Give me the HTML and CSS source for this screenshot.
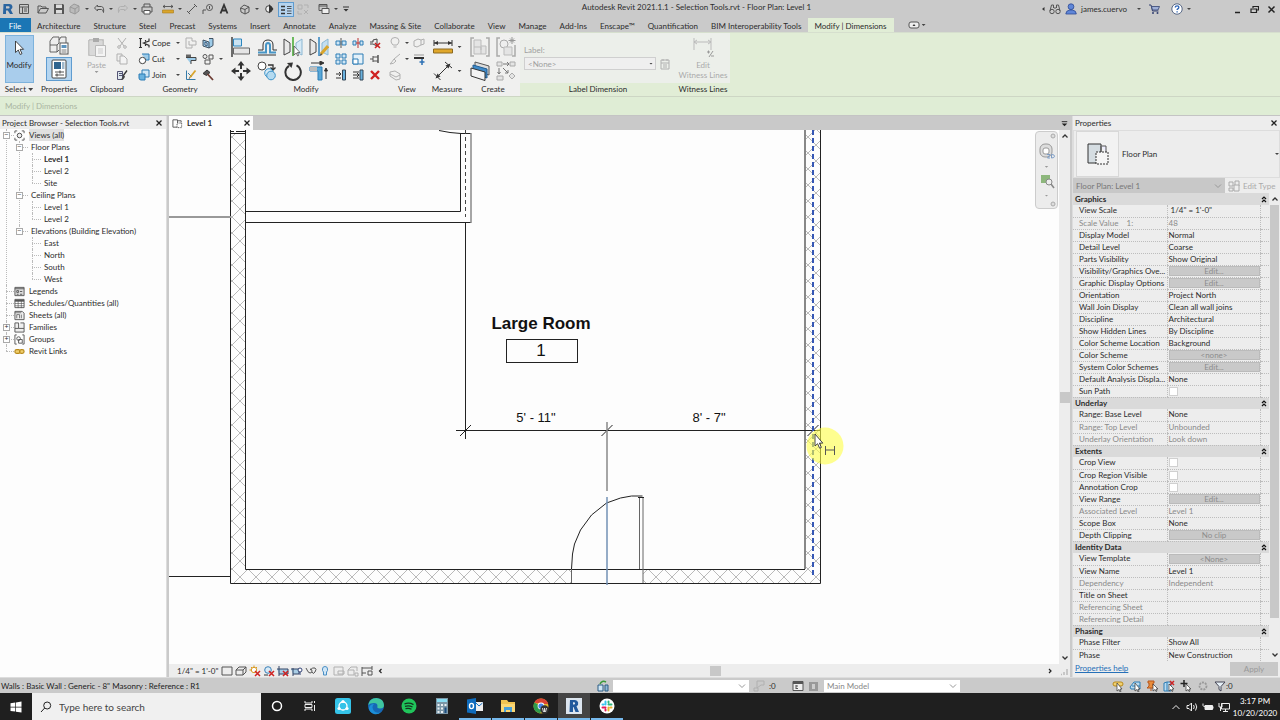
FILE: index.html
```html
<!DOCTYPE html>
<html lang="en">
<head>
<meta charset="utf-8">
<title>Autodesk Revit 2021.1.1 - Selection Tools.rvt - Floor Plan: Level 1</title>
<link rel="stylesheet" href="styles.css">
</head>
<body>
<svg class="defs" aria-hidden="true"><symbol id="chev2" viewBox="0 0 8 8"><path d="M2 4l2-2 2 2M2 7l2-2 2 2" fill="none" stroke="#111" stroke-width="1.200"/></symbol></svg>
<header class="titlebar">
  <div class="qat">
    <svg class="ic" viewBox="0 0 12 12"><path d="M1.500 1H4v10H1zM3 1h4.500a3 3 0 0 1 1.300 5.700L11 11H8L5.800 7.500H3.500V5.500H6.500a1 1 0 0 0 0-2.200H3z" fill="#2a64a0"/></svg>
    <svg class="ic ln" viewBox="0 0 12 12"><path d="M1.500 1.500h9v9h-9zM1.500 4h9M4.500 4v6.500M6 6h3M6 8h3"/></svg>
    <svg class="ic ln sp3" viewBox="0 0 12 12"><path d="M1 10V3h3l1 1h4v1.500M1 10l2.500-4.500h8L9 10z"/></svg>
    <svg class="ic" viewBox="0 0 12 12"><path d="M1 1h9l1 1v9H1z" fill="#555"/><path d="M3 1.500h6v3.500H3zM3 7h6v3.500H3z" fill="#ddd"/></svg>
    <svg class="ic" viewBox="0 0 12 12"><path d="M1 4l4-3 5 2v5l-4 3-5-2z" fill="#bbb" stroke="#999"/><path d="M1 4l5 2 4-3M6 6v5" stroke="#999" fill="none"/></svg>
    <i class="dd"></i>
    <svg class="ic ln" viewBox="0 0 12 12"><path d="M4.500 2L1.500 5l3 3V6.500h4q1.500 0 2 3 .8-5.500-2-6h-4z"/></svg>
    <i class="dd"></i>
    <svg class="ic ln pale" viewBox="0 0 12 12"><path d="M7.500 2l3 3-3 3V6.500h-4q-1.500 0-2 3-.8-5.500 2-6h4z"/></svg>
    <i class="dd"></i>
    <svg class="ic ln" viewBox="0 0 12 12"><path d="M3 4V1h6v3M1 4h10v5H1z"/><path d="M3 7.500h6V11H3z" fill="#fff"/></svg>
    <svg class="ic sp5" viewBox="0 0 12 12"><path d="M1 3.500h10M3 2L1 3.500 3 5M9 2l2 1.500L9 5" stroke="#444" fill="none" stroke-width=".8"/><path d="M.5 7h11v3H.5z" fill="#d9a52c" stroke="#a87a1c" stroke-width=".6"/></svg>
    <i class="dd"></i>
    <svg class="ic ln" viewBox="0 0 12 12"><path d="M2.500 9.500l7-7M1 8l3 3M8 1l3 3"/></svg>
    <svg class="ic ln" viewBox="0 0 12 12"><path d="M1 11V7h3"/><circle cx="7.500" cy="4.500" r="3"/><path d="M7.500 3v3"/></svg>
    <svg class="ic" viewBox="0 0 12 12"><path d="M2.500 10.500L6 2l3.500 8.500M4 7.500h4" fill="none" stroke="#333" stroke-width="1.800"/></svg>
    <svg class="ic ln sp5" viewBox="0 0 12 12"><path d="M1.500 5L5 2l5 2v5l-4 2-4-2zM1.500 5L6 6.500 10 4M6 6.500V11"/></svg>
    <i class="dd"></i>
    <svg class="ic" viewBox="0 0 12 12"><circle cx="6" cy="6" r="3.300" fill="#eee" stroke="#444"/><path d="M6 1l4.500 5L6 10.500z" fill="#333"/></svg>
    <span class="thin"><svg class="ic" viewBox="0 0 12 12"><path d="M1 2.500h4M1 6h4M1 9.500h4" stroke="#333" stroke-width="1.600"/><path d="M7 2.500h4.500M7 4.500h4.500M7 7h4.500M7 9.500h4.500" stroke="#333" stroke-width=".8"/></svg></span>
    <svg class="ic ln pale" viewBox="0 0 12 12"><path d="M1 2h4v4H1zM7 2h4v3M1 8v3h4M7 7l4 4M11 7l-4 4"/></svg>
    <svg class="ic ln sp5" viewBox="0 0 12 12"><path d="M1 1.500h8v6H1zM1 3h8"/><path d="M4 5.500h7v5H4z" fill="#eee"/></svg>
    <i class="dd"></i>
    <svg class="ic qc" viewBox="0 0 12 12"><path d="M3 4h6" stroke="#333"/><path d="M3.500 6h5L6 8.500z" fill="#333"/></svg>
  </div>
  <div class="title">Autodesk Revit 2021.1.1 - Selection Tools.rvt - Floor Plan: Level 1</div>
  <div class="account">
    <svg class="ic n4" viewBox="0 0 4 12"><path d="M3.500 4v4L1 6z" fill="#333"/></svg>
    <svg class="ic ln" viewBox="0 0 12 12"><path d="M2.500 2h2v3M9.500 2h-2v3M5 5h2"/><circle cx="3" cy="8.500" r="2.200"/><circle cx="9" cy="8.500" r="2.200"/><path d="M1 8l1.500-6M11 8L9.500 2"/></svg>
    <svg class="ic" viewBox="0 0 12 12"><circle cx="6" cy="3.700" r="2.900" fill="#5f86d8" stroke="#2d4a94" stroke-width=".8"/><path d="M.8 11q0-3.500 4-4h2.500q4 .5 4 4z" fill="#5f86d8" stroke="#2d4a94" stroke-width=".8"/></svg>
    <span class="user">james.cuervo</span>
    <i class="dd"></i>
    <svg class="ic cart" viewBox="0 0 12 12"><path d="M1 2h2l1.500 6h6" stroke="#344272" fill="none"/><path d="M3.500 3.500h8L10 7H4.500z" fill="#9fb0d8" stroke="#344272" stroke-width=".8"/><circle cx="5" cy="10" r="1" fill="#344272"/><circle cx="9.500" cy="10" r="1" fill="#344272"/></svg>
    <svg class="ic help" viewBox="0 0 12 12"><circle cx="6" cy="6" r="5.200" fill="#fff" stroke="#34496e" stroke-width=".8"/><path d="M4.300 4.600q0-1.700 1.800-1.700t1.700 1.500q0 .9-1 1.500-.7.500-.7 1.200M6.100 8.200v1.300" fill="none" stroke="#2a62b5" stroke-width="1.300"/></svg>
    <i class="dd"></i>
  </div>
  <div class="winbtns">
    <button aria-label="Minimize"><svg viewBox="0 0 9 9"><path d="M2 7.500h5" stroke="#222" stroke-width="1.500"/></svg></button>
    <button aria-label="Restore"><svg viewBox="0 0 9 9"><path d="M3 3V1.500h5.500V5H6.500M1 4h5.500v3.500H1z" fill="none" stroke="#222" stroke-width="1.200"/></svg></button>
    <button aria-label="Close"><svg viewBox="0 0 9 9"><path d="M1.500 1.500l6 6M7.500 1.500l-6 6" stroke="#222" stroke-width="1.500"/></svg></button>
  </div>
</header>

<nav class="tabs">
  <button class="file">File</button>
  <button>Architecture</button><button>Structure</button><button>Steel</button><button>Precast</button><button>Systems</button><button>Insert</button><button>Annotate</button><button>Analyze</button><button>Massing &amp; Site</button><button>Collaborate</button><button>View</button><button>Manage</button><button>Add-Ins</button><button>Enscape™</button><button>Quantification</button><button>BIM Interoperability Tools</button><button class="on">Modify | Dimensions</button>
  <span class="tabopt"><svg viewBox="0 0 12 8"><rect x="1" y="1" width="10" height="6" rx="2" fill="#eee" stroke="#555"/><path d="M4.500 5L6 3l1.500 2z" fill="#333"/></svg><i class="dd"></i></span>
</nav>

<section class="ribbon">
  <div class="panel p-select">
    <div class="body"><button class="modify"><svg viewBox="0 0 12 16"><path d="M2.500 1v11.500l2.800-2.500 1.900 4.500 1.800-.8-2-4.400h3.600z" fill="#fff" stroke="#333" stroke-width=".9"/></svg>Modify</button></div>
    <div class="name">Select <i class="dd"></i></div>
  </div>
  <div class="panel p-prop">
    <div class="body col">
      <svg class="big" viewBox="0 0 20 20"><path d="M1 6l3-4h6v6l-2 2H1zM10 5l2-3h5v6M1 10v7h7l2-2M8 10v7" fill="#eee" stroke="#555" stroke-width=".9"/><rect x="11" y="8" width="8" height="11" fill="#fff" stroke="#555"/><path d="M12.500 10h5v3h-5z" fill="#5c93bd"/><path d="M12.500 15h5M12.500 17h5" stroke="#555" stroke-width=".8"/></svg>
      <span class="sel"><svg class="big" viewBox="0 0 20 20"><rect x="3" y="1" width="14" height="18" rx="1" fill="#fff" stroke="#444"/><path d="M5 3h7v7H5z" fill="#2f648f"/><path d="M13 3h2.500v7H13z" fill="#9fb8cc"/><path d="M6 13h9M6 16h9M11 11.500v3M8 14.500v3" stroke="#555" stroke-width="1.200"/></svg></span>
    </div>
    <div class="name">Properties</div>
  </div>
  <div class="panel p-clip">
    <div class="body">
      <div class="paste"><svg viewBox="0 0 20 20"><path d="M2 3h14v5M2 3v15h6" fill="none" stroke="#b5b5b5" stroke-width="1.500"/><path d="M2.500 3.500h13v5h-7V18h-6z" fill="#d9d9d9"/><rect x="6" y="1" width="6" height="4" fill="#aaa"/><path d="M8.500 8.500h10v11h-10z" fill="#f4f4f4" stroke="#b9b9b9"/><path d="M11 12h5M11 14h5M11 16h5" stroke="#ccc"/></svg>Paste<i class="dd g"></i></div>
      <div class="col3">
        <svg class="ic pale ln" viewBox="0 0 12 12"><path d="M2 1l6 8M10 1L4 9"/><circle cx="3" cy="10" r="1.300"/><circle cx="9" cy="10" r="1.300"/></svg>
        <svg class="ic pale ln" viewBox="0 0 12 12"><path d="M1 1h5v7H1z"/><path d="M4 3h4l3 3v5H4z" fill="#f3f3f3"/></svg>
        <svg class="ic" viewBox="0 0 12 12"><path d="M1.500 2.500h5v8h-5zM3 4.500h3M3 6.500h3" fill="#dfe8ee" stroke="#446" stroke-width=".9"/><path d="M11 1.500L7 7" stroke="#333" stroke-width="1.300"/><path d="M7.500 6L9 7.500Q8 11 4.500 11 6.500 9 7.500 6z" fill="#444"/></svg>
      </div>
    </div>
    <div class="name">Clipboard</div>
  </div>
  <div class="panel p-geom">
    <div class="body geom">
      <span class="cmd"><svg class="ic" viewBox="0 0 12 12"><path d="M1 1.500h3M2.500 1.500v9M1 10.500h3M11 1.500v2.500L5.500 6 11 8.500v2M7.500 3v1.500M7.500 7.500V9" fill="none" stroke="#333" stroke-width="1.200"/></svg>Cope<i class="dd"></i></span>
      <svg class="ic pale ln" viewBox="0 0 12 12"><path d="M1 1h6v3h4v4H7v3H1zM4 4v4h3"/></svg>
      <svg class="ic" viewBox="0 0 12 12"><path d="M1 3l6 2v6L1 9zM7 1.500h4v7L7 11" fill="#9dcbe8" stroke="#345" stroke-width=".9"/><path d="M3 5l2 1v3L3 8z" fill="#fff" stroke="#357"/></svg>
      <span class="cmd"><svg class="ic" viewBox="0 0 12 12"><path d="M4 1h7v6H7" fill="#9dcbe8" stroke="#2c7db5"/><circle cx="4.500" cy="7.500" r="3.200" fill="#fff" stroke="#444"/></svg>Cut<i class="dd"></i></span>
      <svg class="ic" viewBox="0 0 12 12"><path d="M1 1.500h5v3H1z" fill="#666"/><path d="M1 4.500h10v3H6V11" fill="#9dcbe8" stroke="#444"/></svg>
      <svg class="ic ln" viewBox="0 0 12 12"><circle cx="3" cy="3.500" r="2"/><path d="M7 2h4v4H7zM3 7v4h5V7z"/></svg>
      <i class="dd"></i>
      <span class="cmd"><svg class="ic" viewBox="0 0 12 12"><path d="M4 1h7v7H4z" fill="#cfe6f5" stroke="#2c7db5"/><path d="M1 5h6v6H3Q1 11 1 9z" fill="#69b2df" stroke="#2c7db5"/></svg>Join<i class="dd"></i></span>
      <svg class="ic" viewBox="0 0 12 12"><path d="M1.500 1.500v9h9M3 4l4 4" fill="none" stroke="#357ba8"/><path d="M10.500 1.500L5 8.500" stroke="#d9a52c" stroke-width="1.800"/><path d="M5 8.500l-1.200 1.200" stroke="#333"/></svg>
      <svg class="ic" viewBox="0 0 12 12"><path d="M1 4.500L5 1l3 2.500-3.500 3z" fill="#555" stroke="#333"/><path d="M5.500 5L11 11" stroke="#6d3c33" stroke-width="1.800"/></svg>
    </div>
    <div class="name">Geometry</div>
  </div>
  <div class="panel p-mod">
    <div class="body">
      <div class="bigs">
        <svg class="big" viewBox="0 0 20 20"><path d="M1 0v20" stroke="#333" stroke-width="1.400"/><path d="M2.500 2h8v7h-8z" fill="#cbe3f2" stroke="#2c86be"/><path d="M2.500 11h16v6h-16z" fill="#e5e5e5" stroke="#666"/></svg>
        <svg class="big" viewBox="0 0 20 20"><path d="M1 18h18M1 13h5V8q0-5 5-5t5 5v5h4" fill="none" stroke="#333"/><path d="M1 15.500h8V8.500q0-2.500 2-2.500t2 2.500v7h6" fill="none" stroke="#4795c6" stroke-width="2"/></svg>
        <svg class="big" viewBox="0 0 20 20"><path d="M1 2l6 4v9l-6 3z" fill="#e8e8e8" stroke="#444"/><path d="M19 2l-6 4v9l6 3z" fill="#d7eaf6" stroke="#8bb7d3"/><path d="M10 0v19" stroke="#4cae3a" stroke-width="1.600"/><path d="M11 9v9l2.200-2 1.500 3 1-.5-1.300-3h2.600z" fill="#fff" stroke="#444" stroke-width=".7"/></svg>
        <svg class="big" viewBox="0 0 20 20"><path d="M1 2l6 4v9l-6 3z" fill="#e8e8e8" stroke="#444"/><path d="M19 2l-6 4v9l6 3z" fill="#c4dff0" stroke="#8bb7d3"/><path d="M10 0v19" stroke="#3085bf" stroke-width="1.500"/><path d="M19 9l-7 8" stroke="#d9a52c" stroke-width="3"/><path d="M12 16l-1.500 3 2.500-1z" fill="#333"/></svg>
        <svg class="big" viewBox="0 0 20 20"><path d="M10 0l3.500 4.500H11V8H9V4.500H6.500zM10 20l-3.500-4.500H9V12h2v3.500h2.500zM0 10l4.500-3.500V9H8v2H4.500v2.500zM20 10l-4.500 3.500V11H12V9h3.500V6.500z" fill="#333"/></svg>
        <svg class="big" viewBox="0 0 20 20"><circle cx="5" cy="5" r="4" fill="#fff" stroke="#444"/><path d="M11 4h5v4M13.500 6.500L16 9l2.500-2.500" fill="none" stroke="#333" stroke-width="1.300"/><circle cx="12" cy="12" r="4.300" fill="#d7ebf7" stroke="#3c92c8"/><circle cx="14" cy="14.500" r="4.300" fill="#b4daf0" stroke="#3c92c8"/></svg>
        <svg class="big" viewBox="0 0 20 20"><path d="M6 4.800a7.700 7.700 0 1 0 7.500-.4" fill="none" stroke="#333" stroke-width="2"/><path d="M4 2l6-.5L8.500 7z" fill="#333"/></svg>
        <svg class="big" viewBox="0 0 20 20"><path d="M2 2h12M11 0l4 2-4 2z" stroke="#333" fill="#333"/><path d="M1 6h12v13H9V10H1z" fill="#58a8d8" stroke="#2c7db5"/><path d="M1 6h7v4H1z" fill="#bcbcbc"/><path d="M17 18V8M15.500 10L17 7l1.500 3z" stroke="#333" fill="#333"/></svg>
      </div>
      <div class="smalls">
        <svg class="ic" viewBox="0 0 12 12"><path d="M1 4h4v4H1zM7 4h4v4H7z" fill="#cfe6f5" stroke="#2c7db5"/><path d="M6 1v10" stroke="#555"/></svg>
        <svg class="ic" viewBox="0 0 12 12"><path d="M1 4h3v4H1zM8 4h3v4H8z" fill="#cfe6f5" stroke="#2c7db5"/><path d="M6 1v10M4 6h4" stroke="#b33"/></svg>
        <svg class="ic" viewBox="0 0 12 12"><path d="M1 5h3V3l4-1v7L4 7H1" fill="#eee" stroke="#444"/><path d="M6 6l5 5M11 6l-5 5" stroke="#c22" stroke-width="1.600"/></svg>
        <svg class="ic" viewBox="0 0 12 12"><path d="M1 1h4v4H1zM7 1h4v4H7zM1 7h4v4H1zM7 7h4v4H7z" fill="#cfe6f5" stroke="#2c7db5"/></svg>
        <svg class="ic" viewBox="0 0 12 12"><path d="M1 1h10v10H1z" fill="#e4f1f9" stroke="#2c7db5"/><path d="M1 6h5v5H1z" fill="#fff" stroke="#2c7db5"/></svg>
        <svg class="ic ln" viewBox="0 0 12 12"><path d="M1 6h3M4 3v6M4 4h5M4 8h5M9 2v8z"/></svg>
        <svg class="ic" viewBox="0 0 12 12"><path d="M1 5h5M4 3l2 2-2 2M1 9h5" fill="none" stroke="#333"/><path d="M7.500 1h3v10h-3z" fill="#69b2df" stroke="#345"/></svg>
        <svg class="ic" viewBox="0 0 12 12"><path d="M1 3h6M1 6h6M5 4l2 2-2 2M1 9h6" fill="none" stroke="#333"/><path d="M8 1h3v10H8z" fill="#69b2df" stroke="#345"/></svg>
        <svg class="ic" viewBox="0 0 12 12"><path d="M2 2l8 8M10 2l-8 8" stroke="#cf2222" stroke-width="2.400"/></svg>
      </div>
    </div>
    <div class="name">Modify</div>
  </div>
  <div class="panel p-view">
    <div class="body view">
      <svg class="ic pale ln" viewBox="0 0 12 12"><path d="M4 8q-2-2-2-4a4 3.500 0 0 1 8 0q0 2-2 4zM4.500 10h3"/></svg><i class="dd"></i>
      <svg class="ic pale ln" viewBox="0 0 12 12"><path d="M1 4l4-2 3 1v5l-4 2-3-1zM8 3l3-1v5L8 8"/></svg>
      <svg class="ic pale ln" viewBox="0 0 12 12"><path d="M11 1L5 6M5 6l2 2q-2 3-6 3 2-2 4-5z"/></svg><i class="dd"></i>
      <svg class="ic" viewBox="0 0 12 12"><path d="M1 2h10" stroke="#999"/><path d="M1 5h10" stroke="#333" stroke-width="2"/><path d="M9 6v6M6.500 9h5" stroke="#2c70b5" stroke-width="1.500"/></svg>
      <svg class="ic pale ln" viewBox="0 0 12 12"><path d="M1 3l5-1 5 3v5l-4 1-6-4zM1 5l6 3 4-2"/></svg>
    </div>
    <div class="name">View</div>
  </div>
  <div class="panel p-meas">
    <div class="body meas">
      <svg class="big" viewBox="0 0 20 20"><path d="M1 6h18M1 3v6M19 3v6" stroke="#333"/><path d="M1 6l4-2v4zM19 6l-4-2v4z" fill="#333"/><path d="M.5 12h19v4H.5z" fill="#e0a72b" stroke="#8c6a22"/></svg><i class="dd"></i>
      <svg class="big" viewBox="0 0 20 20"><path d="M3 17L17 3M1 12.500l6.500 6.500M12 1l7 6" stroke="#333"/><path d="M2.500 17.500l2-5 3 3zM17.500 2.500l-5 2 3 3z" fill="#333"/></svg><i class="dd"></i>
    </div>
    <div class="name">Measure</div>
  </div>
  <div class="panel p-create">
    <div class="body create">
      <svg class="big" viewBox="0 0 20 20"><path d="M4 1H1v18h3M16 1h3v18h-3" fill="none" stroke="#aaa" stroke-width="1.500"/><path d="M4 3h7v6h5v8H4z" fill="#e4e4e4" stroke="#bbb"/><path d="M4 10h7v7M11 9v4" fill="none" stroke="#bbb"/></svg>
      <svg class="big" viewBox="0 0 20 20"><path d="M4 1H1v18h3M19 8v11h-3" fill="none" stroke="#aaa" stroke-width="1.500"/><circle cx="8" cy="7" r="4" fill="#eee" stroke="#aaa"/><path d="M8 10h8v8H8z" fill="#e4e4e4" stroke="#bbb"/><path d="M16 0v7M12.500 3.500h7M14 1.500l4 4M18 1.500l-4 4" stroke="#999"/></svg>
      <svg class="big" viewBox="0 0 20 20"><path d="M5 1l14 4v9L5 9z" fill="#ddd" stroke="#555"/><path d="M3 4l14 4v9L3 12z" fill="#3f8ac8" stroke="#225d92"/><path d="M1 7l14 4v8.500L1 15z" fill="#f4f4f4" stroke="#333"/></svg>
      <svg class="big" viewBox="0 0 20 20"><path d="M1 1h5v4H1zM14 1h5v4h-5zM1 15h6v4H1zM13 15l3-3 3 3-3 3z" fill="#e4e4e4" stroke="#aaa"/><path d="M7 3h6M11 1l2 2-2 2M3 7v6M1.500 11L3 13l1.500-2M7 7l5 5M12 9v3H9" fill="none" stroke="#777"/></svg>
    </div>
    <div class="name">Create</div>
  </div>
  <div class="panel p-label">
    <div class="body labeldim"><label for="lbl">Label:</label>
      <div class="lblrow"><span class="drop"><select id="lbl" disabled><option>&lt;None&gt;</option></select><i class="dd"></i></span><svg class="ic pale ln" viewBox="0 0 12 12"><path d="M2 2h8v9H2zM2 5h8M4 7h4M4 9h4M4 1v2M8 1v2"/></svg></div></div>
    <div class="name">Label Dimension</div>
  </div>
  <div class="panel p-wit">
    <div class="body wit"><svg viewBox="0 0 20 20"><path d="M1 0v12M18 0v12M1 4h17M4 2L1 4l3 2M15 2l3 2-3 2" fill="none" stroke="#bbb"/><path d="M14 14h3M15.500 12.500v3M16 19l4-6M18 18h3" stroke="#999"/></svg><span>Edit</span><span>Witness Lines</span></div>
    <div class="name">Witness Lines</div>
  </div>
</section>
<div class="options">Modify | Dimensions</div>

<main class="work">
  <aside class="browser">
    <div class="ptitle">Project Browser - Selection Tools.rvt<button class="x" aria-label="Close browser"><svg viewBox="0 0 8 8"><path d="M1.500 1.500l5 5M6.500 1.500l-5 5" stroke="#222" stroke-width="1.300"/></svg></button></div>
    <ul class="tree">
      <li><div class="row"><b class="ex">−</b><svg class="ti" viewBox="0 0 12 12"><path d="M1 3.500V1h2.500M8.500 1H11v2.500M1 8.500V11h2.500M8.500 11H11V8.500" fill="none" stroke="#555"/><circle cx="6" cy="6" r="2.500" fill="#eee" stroke="#444"/></svg><span class="cur">Views (all)</span></div>
        <ul class="l2">
          <li><div class="row"><b class="ex">−</b>Floor Plans</div>
            <ul class="l3"><li><div class="row"><strong>Level 1</strong></div></li><li><div class="row">Level 2</div></li><li><div class="row">Site</div></li></ul></li>
          <li><div class="row"><b class="ex">−</b>Ceiling Plans</div>
            <ul class="l3"><li><div class="row">Level 1</div></li><li><div class="row">Level 2</div></li></ul></li>
          <li><div class="row"><b class="ex">−</b>Elevations (Building Elevation)</div>
            <ul class="l3"><li><div class="row">East</div></li><li><div class="row">North</div></li><li><div class="row">South</div></li><li><div class="row">West</div></li></ul></li>
        </ul></li>
      <li><div class="row"><svg class="ti ln" viewBox="0 0 12 12"><path d="M1 1.500h10v9H1z" fill="#ddd"/><path d="M1 3h10M3 5h2v2H3zM6.500 6H9M3 9h2M6.500 9H9"/></svg>Legends</div></li>
      <li><div class="row"><svg class="ti ln" viewBox="0 0 12 12"><path d="M1 1.500h10v9H1z" fill="#fff"/><path d="M1 3h10" stroke-width="2"/><path d="M1 6h10M1 8.500h10M4.500 3v8M8 3v8" stroke-width=".7"/></svg>Schedules/Quantities (all)</div></li>
      <li><div class="row"><svg class="ti ln" viewBox="0 0 12 12"><path d="M1 1.500h8l2 2v7H1z" fill="#eee"/><path d="M3 9V5h3v4M8 5v4M1 3h7" stroke-width=".8"/></svg>Sheets (all)</div></li>
      <li><div class="row"><b class="ex">+</b><svg class="ti ln" viewBox="0 0 12 12"><path d="M1 1h4v6H1zM7 1h4v6H5M1 7v4h10V7" fill="#eee"/></svg>Families</div></li>
      <li><div class="row"><b class="ex">+</b><svg class="ti ln" viewBox="0 0 12 12"><path d="M3 1H1v10h2M9 1h2v10H9"/><circle cx="5" cy="5" r="2"/><path d="M5 6h4v4H5z"/></svg>Groups</div></li>
      <li><div class="row"><svg class="ti" viewBox="0 0 12 12"><path d="M1 6q0-2 2-2h2q1.500 0 1.500 2T5 8H3Q1 8 1 6zM6 6q0-2 2-2h1q2 0 2 2T9 8H8Q6 8 6 6z" fill="#f0d070" stroke="#b98a1a" stroke-width="1.300"/></svg>Revit Links</div></li>
    </ul>
  </aside>

  <section class="doc">
    <div class="doctabs">
      <div class="doctab"><svg class="ti ln" viewBox="0 0 12 12"><path d="M1 2h5v8H1zM6 3h4v2"/><path d="M5.500 5.500h5v5h-5z" fill="#fff" stroke-dasharray="1.500 1"/></svg><strong>Level 1</strong><button class="x" aria-label="Close tab"><svg viewBox="0 0 8 8"><path d="M1.500 1.500l5 5M6.500 1.500l-5 5" stroke="#222" stroke-width="1.300"/></svg></button></div>
      <svg class="ti" viewBox="0 0 12 12"><path d="M3 4h6" stroke="#222"/><path d="M3 6h6L6 9z" fill="#222"/></svg>
    </div>
    <div class="view-area">
      <svg class="plan" role="img" aria-label="Floor plan">
        <defs><pattern id="hatch" patternUnits="userSpaceOnUse" x="232" y="153" width="16" height="16"><path d="M0 0l16 16M16 0L0 16" stroke="#b2b2b2" stroke-width=".9"/></pattern></defs>
        <g transform="translate(-169 -130)" fill="none" stroke="#222" stroke-width="1">
          <path d="M231 133h15v436h559V130h15v453H231z" fill="url(#hatch)" stroke="none"/>
          <path d="M571 569h72v14h-72z" fill="#fdfdfd" stroke="none"/>
          <path d="M230.500 130v453.500h590V130" />
          <path d="M245.500 130v439.500h559.500" />
          <path d="M805 130v439" stroke="#888" stroke-width="2"/>
          <path d="M230 133.500h16M230 131.500h4M236 131.500h10"/>
          <path d="M246 211.500h214.500V133.500h10.500M246 222.500h225"/>
          <path d="M471 133v90" stroke="#888" stroke-width="1.500"/>
          <path d="M439 130.500l11 2 11 1"/>
          <path d="M465.500 130v87" stroke="#444" stroke-dasharray="4 3"/>
          <path d="M465.500 223v216"/>
          <path d="M169 217h62" stroke="#999" stroke-width="2"/><path d="M169 576.500h62"/>
          <path d="M456 430.500h364"/>
          <path d="M460 436l11-11M601.500 436l11-11M807.500 436l11-11"/>
          <path d="M607 422v69" stroke="#888" stroke-width="1.500"/>
          <path d="M571.500 569l1-15 2-10 6-14 11-15 15-12 14-5 11-2h11" />
          <path d="M571.500 569v14M643 497v86M639.500 497v72" stroke="#666"/><path d="M638 497.500h6"/>
          <path d="M607 497v88" stroke="#7290b5" stroke-width="1.500"/>
          <path d="M813 130v447" stroke="#3557b5" stroke-width="2" stroke-dasharray="5 3"/>
          <rect x="506.500" y="339.500" width="71" height="23" fill="#fdfdfd"/>
          <circle cx="825" cy="446" r="18.500" fill="#ffff46" fill-opacity=".6" stroke="none"/>
          <path d="M825.500 446v9M834.500 446v9M825 450h10" stroke="#555"/>
          <path d="M815 434v12l2.600-2.300 2 4.500 1.800-.8-2-4.300h3.400z" fill="#fff" stroke="#333" stroke-width=".9"/>
          <g class="ptext" stroke="none" fill="#111" text-anchor="middle">
            <text x="541" y="329" class="room">Large Room</text>
            <text x="541" y="356" class="num">1</text>
            <text x="536" y="422">5' - 11"</text>
            <text x="709" y="422">8' - 7"</text>
          </g>
        </g>
      </svg>
      <div class="navbar">
        <svg class="dot" viewBox="0 0 6 6"><circle cx="3" cy="3" r="2" fill="#ddd" stroke="#aaa"/></svg>
        <svg class="nv" viewBox="0 0 18 18"><rect x="2" y="1" width="12" height="13" rx="5" fill="#ddd" stroke="#999"/><rect x="5" y="5" width="6" height="6" rx="2" fill="#fff" stroke="#999"/><path d="M9 11.500h3L9.500 15H12M13.500 11.500v3.500q3 0 3-1.800t-3-1.700z" fill="none" stroke="#7d9cc4"/></svg>
        <i class="dd g"></i>
        <svg class="nv" viewBox="0 0 18 18"><path d="M3 3h9v8H3z" fill="#8db77c"/><circle cx="11" cy="10" r="3" fill="#eee" stroke="#888"/><path d="M13 12l3 4" stroke="#888" stroke-width="1.500"/></svg>
        <i class="dd g"></i>
        <svg class="dot" viewBox="0 0 6 6"><circle cx="3" cy="3" r="2" fill="#ddd" stroke="#aaa"/></svg>
      </div>
      <div class="vbar"><svg viewBox="0 0 8 8"><path d="M1.500 5.500L4 3l2.500 2.500" fill="none" stroke="#333" stroke-width="1.300"/></svg><i></i><svg viewBox="0 0 8 8"><path d="M1.500 2.500L4 5l2.500-2.500" fill="none" stroke="#333" stroke-width="1.300"/></svg></div>
    </div>
    <div class="viewbar">
      <span class="scale">1/4" = 1'-0"</span>
      <svg class="ic ln" viewBox="0 0 12 12"><path d="M1 2h10v8H1z"/></svg>
      <svg class="ic ln" viewBox="0 0 12 12"><path d="M1 5h7v5H1zM1 5l3-3h7L8 5M11 2v5l-3 3"/></svg>
      <svg class="ic" viewBox="0 0 12 12"><circle cx="5" cy="5" r="2.700" fill="#fff" stroke="#d99a22"/><path d="M5 .5v2M.5 5h2M2 2l1 1M8 2L7 3" stroke="#d99a22"/><path d="M6 6l5 5M11 6l-5 5" stroke="#cf2222" stroke-width="1.500"/></svg>
      <svg class="ic" viewBox="0 0 12 12"><circle cx="5" cy="5" r="3.300" fill="#d8eaf6" stroke="#3a80b8"/><path d="M1 10h4" stroke="#333"/><path d="M6 6l5 5M11 6l-5 5" stroke="#cf2222" stroke-width="1.500"/></svg>
      <svg class="ic" viewBox="0 0 12 12"><path d="M2 1v10M0 4h11v5H2" fill="#a9cde5" stroke="#346"/><path d="M6 6l5 5M11 6l-5 5" stroke="#cf2222" stroke-width="1.500"/></svg>
      <svg class="ic" viewBox="0 0 12 12"><path d="M2 3v8M0 4h8v5H2" fill="#a9cde5" stroke="#346"/><circle cx="9" cy="5" r="2" fill="#fff" stroke="#347"/><path d="M9 7v3" stroke="#347"/></svg>
      <svg class="ic ln" viewBox="0 0 12 12"><path d="M1 3q2 5 4 5t2-2-2-2M5 5q3-3 5-2t0 4-3 0"/></svg>
      <svg class="ic" viewBox="0 0 12 12"><path d="M4.500 7Q3 5.500 3.500 4a2.500 2.500 0 0 1 5 0q.5 1.500-1 3v3h-3z" fill="#cfe6f7" stroke="#4b8fc4"/></svg>
      <svg class="ic ln pale" viewBox="0 0 12 12"><path d="M1 2h9v8H1zM5 6h6v3H5z"/></svg>
      <svg class="ic ln pale" viewBox="0 0 12 12"><path d="M1 5h6v5H1zM1 5l3-3h6M10 2v4M8 8h3v3H8z"/></svg>
      <svg class="ic ln" viewBox="0 0 12 12"><path d="M1 2v9M11 1v4M1 3h10M1 8h4M7 6h4v4H7z"/></svg>
      <svg class="ic" viewBox="0 0 12 12"><path d="M6.500 4L4.500 6l2 2" fill="none" stroke="#222" stroke-width="1.200"/></svg>
      <div class="htrack"><i></i></div>
      <svg class="ic" viewBox="0 0 12 12"><path d="M5 4l2 2-2 2" fill="none" stroke="#222" stroke-width="1.200"/></svg>
      <svg class="ic" viewBox="0 0 12 12"><path d="M3 9.500h1M6 7v3M9 4v6" stroke="#bbb" stroke-width="1.500"/></svg>
    </div>
  </section>

  <aside class="props">
    <div class="ptitle">Properties<button class="x" aria-label="Close properties"><svg viewBox="0 0 8 8"><path d="M1.500 1.500l5 5M6.500 1.500l-5 5" stroke="#222" stroke-width="1.300"/></svg></button></div>
    <div class="type"><div class="thumb"><svg viewBox="0 0 22 22"><path d="M1 1h13v19H1z" fill="#d5dde2" stroke="#333"/><path d="M14 3h5v6M14 3v6" fill="#eef" stroke="#555"/><path d="M9 9h12v12H9z" fill="#f6f6f6" stroke="#333" stroke-dasharray="2 1"/></svg></div><span>Floor Plan</span><i class="dd"></i></div>
    <div class="inst"><span class="drop"><select aria-label="Instance" disabled><option>Floor Plan: Level 1</option></select><svg class="cv" viewBox="0 0 8 8"><path d="M1 2.500l3 3 3-3" fill="none" stroke="#999"/></svg></span><button disabled><svg class="ic ln" viewBox="0 0 12 12"><path d="M1 2h4v4H1zM7 1h4v5H7zM1 8h4v3H1z"/><path d="M6 5h5v6H6z" fill="#eee"/></svg>Edit Type</button></div>
    <div class="gridwrap">
      <table class="grid">
        <colgroup><col class="c1"><col class="c2"><col class="c3"></colgroup>
        <tbody>
        <tr class="h"><th colspan="2">Graphics</th><td><svg><use href="#chev2"/></svg></td></tr>
        <tr><td>View Scale</td><td>&nbsp;1/4" = 1'-0"</td><td></td></tr>
        <tr class="d"><td>Scale Value &nbsp;&nbsp; 1:</td><td>48</td><td></td></tr>
        <tr><td>Display Model</td><td>Normal</td><td></td></tr>
        <tr><td>Detail Level</td><td>Coarse</td><td></td></tr>
        <tr><td>Parts Visibility</td><td>Show Original</td><td></td></tr>
        <tr><td>Visibility/Graphics Ove...</td><td><button disabled>Edit...</button></td><td></td></tr>
        <tr><td>Graphic Display Options</td><td><button disabled>Edit...</button></td><td></td></tr>
        <tr><td>Orientation</td><td>Project North</td><td></td></tr>
        <tr><td>Wall Join Display</td><td>Clean all wall joins</td><td></td></tr>
        <tr><td>Discipline</td><td>Architectural</td><td></td></tr>
        <tr><td>Show Hidden Lines</td><td>By Discipline</td><td></td></tr>
        <tr><td>Color Scheme Location</td><td>Background</td><td></td></tr>
        <tr><td>Color Scheme</td><td><button disabled>&lt;none&gt;</button></td><td></td></tr>
        <tr><td>System Color Schemes</td><td><button disabled>Edit...</button></td><td></td></tr>
        <tr><td>Default Analysis Displa...</td><td>None</td><td></td></tr>
        <tr><td><label for="sun">Sun Path</label></td><td><input type="checkbox" id="sun"></td><td></td></tr>
        <tr class="h"><th colspan="2">Underlay</th><td><svg><use href="#chev2"/></svg></td></tr>
        <tr><td>Range: Base Level</td><td>None</td><td></td></tr>
        <tr class="d"><td>Range: Top Level</td><td>Unbounded</td><td></td></tr>
        <tr class="d"><td>Underlay Orientation</td><td>Look down</td><td></td></tr>
        <tr class="h"><th colspan="2">Extents</th><td><svg><use href="#chev2"/></svg></td></tr>
        <tr><td><label for="crop">Crop View</label></td><td><input type="checkbox" id="crop"></td><td></td></tr>
        <tr><td><label for="region">Crop Region Visible</label></td><td><input type="checkbox" id="region"></td><td></td></tr>
        <tr><td><label for="anno">Annotation Crop</label></td><td><input type="checkbox" id="anno"></td><td></td></tr>
        <tr><td>View Range</td><td><button disabled>Edit...</button></td><td></td></tr>
        <tr class="d"><td>Associated Level</td><td>Level 1</td><td></td></tr>
        <tr><td>Scope Box</td><td>None</td><td></td></tr>
        <tr><td>Depth Clipping</td><td><button disabled>No clip</button></td><td></td></tr>
        <tr class="h"><th colspan="2">Identity Data</th><td><svg><use href="#chev2"/></svg></td></tr>
        <tr><td>View Template</td><td><button disabled>&lt;None&gt;</button></td><td></td></tr>
        <tr><td>View Name</td><td>Level 1</td><td></td></tr>
        <tr class="d"><td>Dependency</td><td>Independent</td><td></td></tr>
        <tr><td>Title on Sheet</td><td></td><td></td></tr>
        <tr class="d"><td>Referencing Sheet</td><td></td><td></td></tr>
        <tr class="d"><td>Referencing Detail</td><td></td><td></td></tr>
        <tr class="h"><th colspan="2">Phasing</th><td><svg><use href="#chev2"/></svg></td></tr>
        <tr><td>Phase Filter</td><td>Show All</td><td></td></tr>
        <tr><td>Phase</td><td>New Construction</td><td></td></tr>
        </tbody>
      </table>
      <div class="pscroll"><svg viewBox="0 0 8 8"><path d="M1.500 5.500L4 3l2.500 2.500" fill="none" stroke="#333" stroke-width="1.300"/></svg><i></i><svg viewBox="0 0 8 8"><path d="M1.500 2.500L4 5l2.500-2.500" fill="none" stroke="#333" stroke-width="1.300"/></svg></div>
    </div>
    <div class="pfoot"><a href="#">Properties help</a><button disabled>Apply</button></div>
  </aside>
</main>

<footer class="status">
  <span class="msg">Walls : Basic Wall : Generic - 8" Masonry : Reference : R1</span>
  <svg class="ic" viewBox="0 0 12 12"><path d="M1 5h5v6H1z" fill="#cfe6f5" stroke="#2a5d85"/><path d="M8 5h3v6H8z" fill="#8fb8d5" stroke="#2a5d85"/><path d="M3 4q2-4 6-2" fill="none" stroke="#3a9a3a" stroke-width="1.500"/></svg>
  <span class="drop"><select aria-label="Workset"><option></option></select><svg class="cv" viewBox="0 0 8 8"><path d="M1 2.500l3 3 3-3" fill="none" stroke="#999"/></svg></span>
  <svg class="ic ln pale" viewBox="0 0 12 12"><path d="M4 1h7v4H8L4 8zM1 8h4v3H1z"/></svg><span class="cnt">:0</span>
  <svg class="ic ln wk" viewBox="0 0 12 12"><path d="M1 1.500h10v9H1z" fill="#eee"/><path d="M1 3h10" stroke-width="2"/><path d="M4 5v4M4 6h2M4 8.500h2"/></svg>
  <svg class="ic" viewBox="0 0 12 12"><path d="M1 2h9v9H1z" fill="#999"/><path d="M4 4h3v5H4z" fill="#ccc"/></svg>
  <span class="drop"><select aria-label="Design option" class="opt"><option>Main Model</option></select><svg class="cv" viewBox="0 0 8 8"><path d="M1 2.500l3 3 3-3" fill="none" stroke="#999"/></svg></span>
  <div class="selopts">
    <svg class="ic" viewBox="0 0 12 12"><path d="M1 4q0-2 2-2h6q2 0 2 2T9 6H3Q1 6 1 4z" fill="#f0d070" stroke="#b98a1a"/><path d="M5 3v8l2-1.500L8 12l1-.5-1-2.500h2z" fill="#fff" stroke="#333" stroke-width=".7"/></svg>
    <svg class="ic" viewBox="0 0 12 12"><path d="M1 7l4-5h6v7H2z" fill="#b9dbf0" stroke="#2c7db5"/><path d="M3 6h8" stroke="#2c7db5"/><path d="M6 3v8l2-1.500L9 12l1-.5L9 9h2z" fill="#fff" stroke="#333" stroke-width=".7"/></svg>
    <svg class="ic" viewBox="0 0 12 12"><path d="M2 1h6v2H7v3l2 2H1l2-2V3H2zM5 8v3" fill="#e98d3c" stroke="#b8561b"/><path d="M7 4v7l2-1.500 1 2 1-.5-1-2h2z" fill="#fff" stroke="#333" stroke-width=".7"/></svg>
    <svg class="ic" viewBox="0 0 12 12"><path d="M1 3l3-1v9H1zM4 2h4v9H4" fill="#b9dbf0" stroke="#2c7db5"/><path d="M7 1l4 4M11 1L7 5" stroke="#cf2222" stroke-width="1.500"/><path d="M6 4v7l2-1.500 1 2 1-.5-1-2h2z" fill="#fff" stroke="#333" stroke-width=".7"/></svg>
    <svg class="ic" viewBox="0 0 12 12"><path d="M4 0v7M.5 3.500h7" stroke="#222" stroke-width="1.500"/><path d="M6 4v7l2-1.500 1 2 1-.5-1-2h2z" fill="#fff" stroke="#333" stroke-width=".7"/></svg>
    <svg class="ic" viewBox="0 0 12 12"><circle cx="6" cy="6" r="3.500" fill="none" stroke="#999" stroke-width="1.800" stroke-dasharray="2 1"/></svg>
    <span class="filter"><svg class="ic" viewBox="0 0 12 12"><path d="M1 2h10L7 6.500V11L5 9.500v-3z" fill="#e6f0f7" stroke="#445"/></svg>:0</span>
  </div>
</footer>

<footer class="taskbar">
  <button class="start" aria-label="Start"><svg viewBox="0 0 12 12"><path d="M.5 2.200L5.300 1.500v4.200H.5zM6 1.400L11.500.6v5.100H6zM.5 6.400h4.800v4.200L.5 9.900zM6 6.400h5.500v5.100L6 10.700z" fill="#fff"/></svg></button>
  <div class="search"><svg viewBox="0 0 12 12"><circle cx="7.200" cy="4.500" r="3.500" fill="none" stroke="#222"/><path d="M4.700 7L1 11" stroke="#222"/></svg><input type="text" aria-label="Search" placeholder="Type here to search"></div>
  <div class="apps">
    <button aria-label="Cortana"><svg viewBox="0 0 18 18"><circle cx="9" cy="9" r="4.500" fill="none" stroke="#fff" stroke-width="1.500"/></svg></button>
    <button aria-label="Task view"><svg viewBox="0 0 18 18"><path d="M4 4v2h7V4M4 14v-2h7v2M4 7.500h7v3H4zM13.500 4v2M13.500 8v6" fill="none" stroke="#eee"/></svg></button>
    <button aria-label="Share"><svg viewBox="0 0 18 18"><rect x="1" y="1" width="16" height="16" rx="2.500" fill="#35c3e8"/><circle cx="9" cy="9" r="4" fill="none" stroke="#fff" stroke-width="1.300"/><circle cx="9" cy="4.500" r="1.600" fill="#fff"/><circle cx="5" cy="11.500" r="1.600" fill="#fff"/><circle cx="13" cy="11.500" r="1.600" fill="#fff"/></svg></button>
    <button aria-label="Edge"><svg viewBox="0 0 18 18"><circle cx="9" cy="9" r="8" fill="#1668b5"/><path d="M1.300 8Q2.500 1 9.500 1q7 .5 7.500 7 0 3.500-4 3.500-3.500 0-2.500-2.500 0-3-3.500-3Q3 6 1.300 8z" fill="#3fc6a0"/><path d="M7 7q-3 3 0 7 3 3 7 1-3 3-7 2-5-2-5-6 1-4 5-4z" fill="#1c8fd8"/></svg></button>
    <button aria-label="Spotify"><svg viewBox="0 0 18 18"><circle cx="9" cy="9" r="7.500" fill="#20c55b"/><path d="M4.500 6.800q5-1.500 9 .8M5 9.300q4-1.300 7.500.7M5.500 11.700q3.500-1 6 .6" fill="none" stroke="#13341e" stroke-width="1.300"/></svg></button>
    <button aria-label="Calculator"><svg viewBox="0 0 18 18"><rect x="3" y="1" width="12" height="16" fill="#7c96a6"/><path d="M4 2h10v3H4z" fill="#8adcf2"/><path d="M4.500 7h2v2h-2zM8 7h2v2H8zM4.500 10.500h2v2h-2zM8 10.500h2v2H8zM4.500 14h2v2h-2zM8 14h2v2H8zM11.500 7h2v2h-2z" fill="#e8eef2"/><path d="M11.500 10.500h2V16h-2z" fill="#1b4d80"/></svg></button>
    <button aria-label="Outlook" class="run"><svg viewBox="0 0 18 18"><path d="M9 5h8v9H9z" fill="#eee"/><path d="M10 6l3 3 3.500-3" fill="none" stroke="#1670c0"/><path d="M1 2.500L10 1v16l-9-1.500z" fill="#0f6cbd"/><ellipse cx="5.500" cy="9" rx="2" ry="2.600" fill="none" stroke="#fff" stroke-width="1.400"/></svg></button>
    <button aria-label="Explorer" class="run"><svg viewBox="0 0 18 18"><path d="M2 3h6l1.500 2H16v10H2z" fill="#f0c352"/><path d="M2 7h14v8H2z" fill="#fad775"/><path d="M5 10h8v5h-2v-2H7v2H5z" fill="#4aa0d8"/></svg></button>
    <button aria-label="Chrome" class="run"><svg viewBox="0 0 18 18"><circle cx="9" cy="9" r="7.500" fill="#e3b62c"/><path d="M2.300 5.500A7.500 7.500 0 0 1 16.200 7H9z" fill="#d94436"/><path d="M2.300 5.500A7.500 7.500 0 0 0 8 16.400L11 10z" fill="#2f9b4c"/><circle cx="9" cy="9" r="3.400" fill="#fff"/><circle cx="9" cy="9" r="2.600" fill="#4684e8"/><circle cx="12.500" cy="12.500" r="4.200" fill="#333"/><path d="M10.500 11l1 4M12.500 11v4M14.500 11l-1 4" stroke="#ddd"/></svg></button>
    <button aria-label="Revit" class="run act"><svg viewBox="0 0 18 18"><rect x="1" y="1" width="16" height="16" fill="#dce5ef"/><path d="M5 3h3v12H4.500zM7 3h3a3.300 3.300 0 0 1 1.500 6.200l2.500 5.800h-3.500L8.500 10H7V7.500h2a1 1 0 0 0 0-2.200H7z" fill="#22599c"/></svg></button>
    <button aria-label="Slack" class="run"><svg viewBox="0 0 18 18"><circle cx="9" cy="9" r="7.500" fill="#fff"/><g stroke-width="2" stroke-linecap="round"><path d="M7.500 4.500v3M4.500 7.500h1" stroke="#36c5f0"/><path d="M10.500 7.500h3M10.500 4.500v1" stroke="#2eb67d"/><path d="M10.500 10.500v3M13.500 10.500h-1" stroke="#ecb22e"/><path d="M7.500 10.500h-3M7.500 13.500v-1" stroke="#e01e5a"/></g></svg></button>
  </div>
  <div class="tray">
    <svg viewBox="0 0 12 12"><path d="M2.500 8L6 4.500 9.500 8" fill="none" stroke="#eee"/></svg>
    <svg viewBox="0 0 12 12"><path d="M1 4.500h2L5.500 2v8L3 7.500H1zM7.500 4q1.500 2 0 4M9.500 2.500q2.500 3.500 0 7" fill="none" stroke="#eee"/></svg>
    <svg viewBox="0 0 12 12"><path d="M3 4.500h7.500v4H3zM11 5.500v2" fill="#eee" stroke="#eee"/><path d="M1 2.500v2q0 1 2 1" stroke="#eee" fill="none"/></svg>
    <svg viewBox="0 0 12 12"><path d="M3.500 2.500h8v5.500h-8zM5 10.500h5M7.500 8v2M1 2v4h3V2M2.500 6v4" fill="none" stroke="#eee"/></svg>
    <div class="clock"><span>3:17 PM</span><span>10/20/2020</span></div>
  </div>
</footer>
</body>
</html>
```
FILE: styles.css
```css
* { box-sizing: border-box; }
html, body { height: 100%; }
body {
  margin: 0;
  display: flex;
  flex-direction: column;
  overflow: hidden;
  background: #cacaca;
  color: #2c2c2c;
  font: 8px/12px Lato, "Open Sans", sans-serif;
}
button, select, input { font: inherit; color: inherit; border: 0; padding: 0; margin: 0; background: none; border-radius: 0; }
svg { display: block; flex: none; }
ul { list-style: none; margin: 0; padding: 0; }
.defs { position: absolute; width: 0; height: 0; }
.ic { width: 12px; height: 12px; }
.ti { width: 11px; height: 11px; }
.big { width: 20px; height: 20px; }
.ln { fill: none; stroke: #555; }
.ln.pale { stroke: #b0b0b0; }
.dd { width: 4px; height: 2px; flex: none; display: inline-block; background: #444; clip-path: polygon(0 0, 100% 0, 50% 100%); }
.dd.g { background: #999; }
.drop { position: relative; display: flex; }
.drop select { appearance: none; width: 100%; padding-left: 3px; }
.drop .dd, .drop .cv { position: absolute; right: 3px; top: 50%; margin-top: -1px; pointer-events: none; }
.drop .cv { width: 8px; height: 8px; margin-top: -4px; }

/* title bar */
.titlebar { display: flex; height: 18px; align-items: center; flex: none; }
.qat { display: flex; align-items: center; gap: 4px; padding-left: 2px; }
.sp3 { margin-left: 3px; }
.sp5 { margin-left: 5px; }
.qc { margin-left: -2px; }
.n4 { width: 4px; }
.thin { width: 16px; height: 15px; padding: 1px; background: #b5d3ee; border: 1px solid #5f9cd0; margin: 0 -1px; }
.title { flex: 1; text-align: center; padding-bottom: 4px; white-space: nowrap; }
.account { display: flex; align-items: center; gap: 4px; }
.user { width: 52px; }
.cart { margin-left: 3px; }
.help { margin-left: 7px; }
.winbtns { display: flex; gap: 8px; margin-left: 42px; padding-right: 4px; }
.winbtns svg { width: 9px; height: 9px; }

/* tabs */
.tabs { display: flex; height: 15px; flex: none; border-bottom: 1px solid #d6dfce; }
.tabs button { padding: 1px 7px 0 6px; white-space: nowrap; }
.tabs .file { background: #1b76b5; color: #fff; width: 31px; }
.tabs .on { background: #e1edd6; }
.tabopt { display: flex; align-items: center; gap: 2px; padding-left: 14px; }
.tabopt svg { width: 12px; height: 8px; }

/* ribbon */
.ribbon { display: flex; height: 64px; flex: none; background: #e1edd6; border-bottom: 1px solid #cdd6c4; }
.panel { flex: none; display: flex; flex-direction: column; background: #f0f0ef; }
.body { height: 50px; padding-top: 4px; display: flex; justify-content: center; }
.name { text-align: center; white-space: nowrap; }
.name .dd { width: 5px; height: 3px; vertical-align: 1px; }
.p-select { width: 38px; }
.p-prop { width: 42px; }
.p-clip { width: 54px; }
.p-geom { width: 92px; }
.p-mod { width: 160px; }
.p-view { width: 42px; }
.p-meas { width: 38px; }
.p-create { width: 54px; }
.p-label { width: 156px; background: none; }
.p-wit { width: 54px; background: none; }
.p-label .body, .p-wit .body { background: #ecefea; }
.p-select .body, .p-prop .body { padding-top: 2px; }
.modify { width: 29px; height: 48px; background: #a9cdec; border: 1px solid #7db2dc; display: flex; flex-direction: column; align-items: center; padding-top: 4px; gap: 3px; }
.modify svg { width: 12px; height: 16px; }
.col { flex-direction: column; align-items: center; justify-content: flex-start; gap: 2px; }
.sel { background: #b5d6f1; border: 1px solid #5f9cd0; padding: 1px 2px; }
.p-clip .body { gap: 9px; }
.paste { display: flex; flex-direction: column; align-items: center; color: #aaa; }
.paste svg { width: 20px; height: 20px; margin-bottom: 2px; }
.col3 { display: flex; flex-direction: column; gap: 4px; }
.geom { display: grid; grid-template-columns: 42px 12px 12px 4px; grid-auto-rows: 12px; gap: 4px 5px; align-items: center; padding-left: 4px; justify-content: start; }
.cmd { grid-column: 1; display: flex; align-items: center; gap: 2px; }
.cmd .dd { margin-left: auto; }
.p-mod .body { gap: 6px; }
.bigs { display: grid; grid-template-columns: repeat(4, 20px); grid-auto-rows: 20px; gap: 4px 6px; }
.smalls { display: grid; grid-template-columns: repeat(3, 12px); grid-auto-rows: 12px; gap: 4px 5px; }
.view { display: grid; grid-template-columns: 12px 4px 12px; grid-auto-rows: 12px; gap: 4px; align-items: center; }
.meas { display: grid; grid-template-columns: 20px 4px; grid-auto-rows: 20px; gap: 4px 5px; align-items: center; }
.create { display: grid; grid-template-columns: 20px 20px; grid-auto-rows: 20px; gap: 4px 6px; }
.labeldim { flex-direction: column; justify-content: flex-start; color: #a0a0a0; padding: 11px 5px 0 4px; gap: 1px; }
.lblrow { display: flex; align-items: center; gap: 3px; }
.lblrow .drop { flex: 1; }
.lblrow select { height: 13px; border: 1px solid #cfcfcf; background: #efefef; opacity: 1; color: #a0a0a0; }
.wit { flex-direction: column; align-items: center; justify-content: flex-start; color: #aaa; line-height: 10px; white-space: nowrap; padding-top: 5px; }
.wit svg { width: 22px; height: 20px; margin-bottom: 2px; }
.options { height: 18px; flex: none; background: #dfedd5; color: #aab5a2; padding: 3px 5px; }

/* workspace */
.work { flex: 1; min-height: 0; display: flex; border-top: 1px solid #c4c4c4; }
.browser { width: 167px; background: #fdfdfd; border-right: 1px solid #ddd; flex: none; }
.ptitle { display: flex; height: 14px; align-items: center; justify-content: space-between; background: #ededed; padding-left: 2px; }
.x { width: 8px; height: 8px; }
.x svg { width: 8px; height: 8px; }
.browser .ptitle { height: 13px; }
.browser .x { margin-right: 3px; }
.tree { padding-left: 6px; }
.tree li { position: relative; }
.tree li::before { content: ""; position: absolute; left: 0; top: 0; bottom: 0; border-left: 1px dotted #bbb; }
.tree li:last-child::before { bottom: auto; height: 6px; }
.row { display: flex; align-items: center; height: 12px; position: relative; white-space: nowrap; }
.row::before { content: ""; width: 8px; border-top: 1px dotted #bbb; }
.row .ti { margin-right: 4px; }
.ex { position: absolute; left: -3px; top: 3px; width: 7px; height: 7px; border: 1px solid #aaa; background: #fff; font: 7px/4px "Open Sans", sans-serif; text-align: center; }
.cur { background: #e0e0e0; }
.l2 { padding-left: 13px; }
.l2 .row::before { width: 9px; margin-right: 3px; }
.l3 { padding-left: 13px; }
.doc { flex: 1; min-width: 0; display: flex; flex-direction: column; margin: 0 2px; background: #ededed; }
.doctabs { display: flex; height: 14px; background: #c9c9c9; align-items: center; justify-content: space-between; flex: none; }
.doctab { width: 84px; height: 14px; background: #fdfdfd; display: flex; align-items: center; padding: 0 2px 0 3px; gap: 4px; }
.doctab strong { flex: 1; }
.view-area { flex: 1; min-height: 0; position: relative; display: flex; background: #fdfdfd; }
.plan { flex: 1; height: 100%; min-width: 0; }
.ptext { font: 13px "Liberation Sans", Arial, sans-serif; }
.room { font-size: 17px; font-weight: bold; }
.num { font-size: 17px; }
.navbar { position: absolute; right: 12px; top: 1px; width: 23px; height: 78px; border: 1px solid #ccc; border-radius: 4px; background: #ececec; display: flex; flex-direction: column; align-items: center; justify-content: space-between; padding: 1px 0; }
.nv { width: 18px; height: 18px; }
.dot { width: 6px; height: 6px; align-self: flex-end; margin-right: 1px; }
.vbar { width: 11px; background: #ededed; display: flex; flex-direction: column; justify-content: space-between; align-items: center; padding: 2px 0; }
.vbar svg, .pscroll svg { width: 8px; height: 8px; }
.vbar i { width: 10px; height: 11px; background: #c8c8c8; }
.viewbar { display: flex; align-items: center; height: 13px; flex: none; padding-left: 8px; gap: 2px; }
.scale { width: 42px; white-space: nowrap; }
.htrack { flex: 1; display: flex; justify-content: center; }
.htrack i { width: 11px; height: 10px; background: #c8c8c8; }

/* properties */
.props { width: 208px; flex: none; background: #ededed; display: flex; flex-direction: column; border-left: 1px solid #ddd; }
.ptitle .x { flex: none; }
.props .ptitle { flex: none; padding-right: 2px; }
.type { display: flex; height: 48px; align-items: center; gap: 3px; border: 1px solid #ddd; padding-left: 2px; flex: none; }
.type span { flex: 1; }
.thumb { width: 43px; height: 46px; border: 1px solid #d8d8d8; background: #f2f2f2; display: grid; place-items: center; }
.thumb svg { width: 22px; height: 22px; }
.inst { display: flex; height: 15px; gap: 3px; flex: none; }
.inst .drop { width: 152px; }
.inst select { background: #c8c8c8; color: #777; opacity: 1; }
.inst button { display: flex; align-items: center; gap: 3px; color: #aaa; white-space: nowrap; }
.inst .ic { stroke: #aaa; }
.gridwrap { flex: 1; min-height: 0; display: flex; overflow: hidden; }
.grid { flex: 1; border-collapse: collapse; table-layout: fixed; line-height: 11px; align-self: flex-start; }
.c2 { width: 93px; }
.c3 { width: 9px; }
.grid tr { height: 12px; }
.grid td { padding: 0 0 0 1px; border: 1px dotted #bdbdbd; border-width: 0 0 1px 1px; white-space: nowrap; overflow: hidden; height: 12px; }
.grid td:first-child { padding-left: 6px; border-left: 0; }
.grid .d { color: #8a8a8a; }
.grid .h { background: #dadada; }
.grid th { text-align: left; padding: 0 2px; font-weight: bold; }
.grid .h td { border: 0; padding: 0; }
.grid .h svg { width: 8px; height: 8px; }
.grid button { display: block; width: 100%; height: 10px; line-height: 8px; background: #c9c9c9; border: 1px solid #bbb; color: #8d8d8d; }
.grid input { appearance: none; display: block; width: 9px; height: 9px; background: #fff; border: 1px solid #d0d0d0; }
.pscroll { width: 11px; display: flex; flex-direction: column; align-items: center; padding: 2px 0; gap: 2px; }
.pscroll i { width: 9px; background: #c8c8c8; flex: 0 1 413px; margin-bottom: auto; }
.pfoot { display: flex; height: 16px; flex: none; justify-content: space-between; padding: 1px 2px; }
.pfoot a { color: #2670b8; }
.pfoot button { width: 48px; background: #c8c8c8; color: #999; }

/* status and task bars */
.status { display: flex; align-items: center; height: 16px; flex: none; border-top: 1px solid #ddd; gap: 4px; padding-left: 1px; }
.msg { width: 592px; white-space: nowrap; flex: 0 1 592px; color: #222; }
.status .drop { width: 136px; }
.status select { height: 12px; background: #fff; color: #888; }
.cnt { width: 19px; }
.selopts { margin-left: auto; display: flex; gap: 5px; width: 168px; }
.filter { display: flex; }
.taskbar { display: flex; height: 27px; flex: none; background: #1f1f1f; color: #fff; }
.start { width: 32px; display: grid; place-items: center; }
.start svg { width: 12px; height: 12px; }
.search { width: 229px; background: #f0f0f0; display: flex; align-items: center; gap: 7px; padding-left: 8px; }
.search svg { width: 12px; height: 12px; }
.search input { flex: 1; min-width: 0; font-size: 10px; color: #444; }
.search input::placeholder { color: #444; opacity: 1; }
.apps { display: flex; gap: 1px; }
.apps button { width: 32px; display: grid; place-items: center; border-bottom: 2px solid transparent; }
.apps svg { width: 18px; height: 18px; }
.apps .run { border-color: #76b9ed; }
.apps .act { background: #444; }
.tray { margin-left: auto; display: flex; align-items: center; gap: 4px; padding-right: 4px; }
.tray svg { width: 12px; height: 12px; }
.clock { display: flex; flex-direction: column; align-items: center; width: 42px; }
```
